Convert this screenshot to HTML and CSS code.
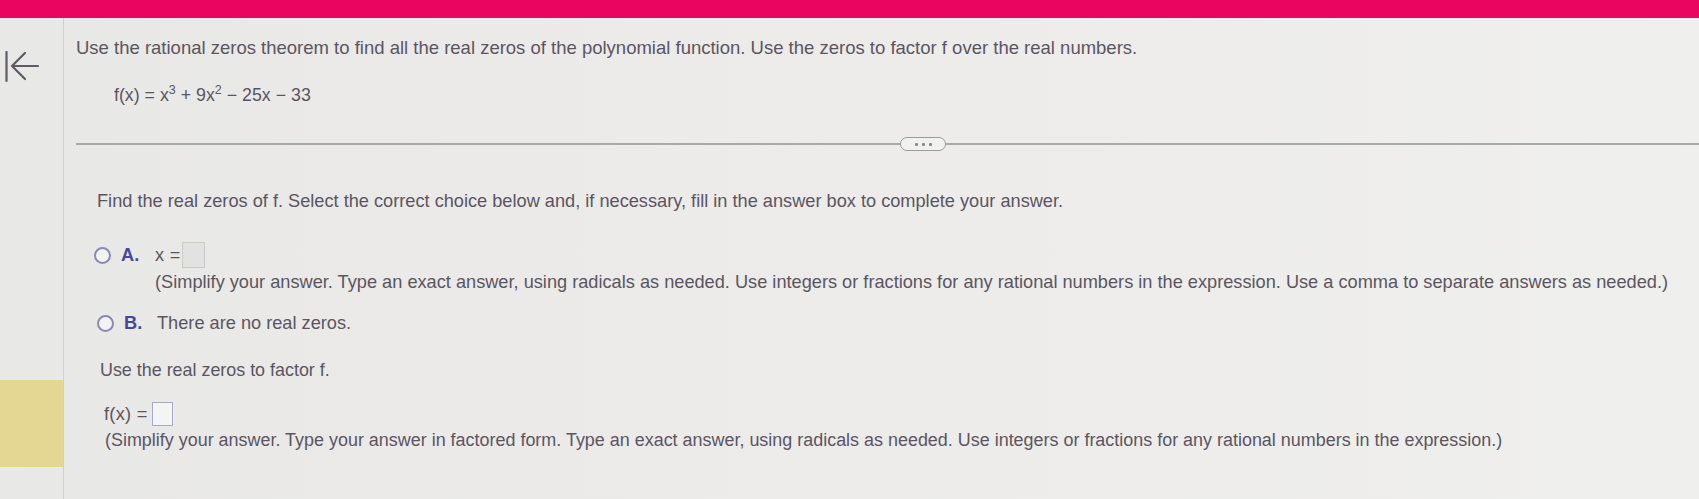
FILE: index.html
```html
<!DOCTYPE html>
<html>
<head>
<meta charset="utf-8">
<link rel="stylesheet" href="styles.css">
</head>
<body>
<div class="topbar"></div>
<div class="main">
  <aside class="sidebar">
    <svg class="back" width="40" height="32" viewBox="0 0 40 32">
      <path d="M5.5 1 V30" stroke="#5f5a66" stroke-width="2.2" fill="none" stroke-linecap="round"/>
      <path d="M11 15 H37 M24 2 L11 15 L24 28" stroke="#5f5a66" stroke-width="2.2" fill="none" stroke-linecap="round" stroke-linejoin="round"/>
    </svg>
    <div class="marker"></div>
  </aside>
  <section class="content">
    <p class="title">Use the rational zeros theorem to find all the real zeros of the polynomial function. Use the zeros to factor f over the real numbers.</p>
    <p class="formula">f(x) = x<sup>3</sup> + 9x<sup>2</sup> − 25x − 33</p>
    <div class="divider">
      <span class="line left"></span>
      <span class="pill"><i></i><i></i><i></i></span>
      <span class="line right"></span>
    </div>
    <p class="find">Find the real zeros of f. Select the correct choice below and, if necessary, fill in the answer box to complete your answer.</p>
    <div class="opt opt-a">
      <span class="radio"></span><span class="letter">A.</span>
      <span class="eq">x =</span><span class="box box-gray"></span>
    </div>
    <p class="hint hint-a">(Simplify your answer. Type an exact answer, using radicals as needed. Use integers or fractions for any rational numbers in the expression. Use a comma to separate answers as needed.)</p>
    <div class="opt opt-b">
      <span class="radio"></span><span class="letter">B.</span>
      <span class="txt">There are no real zeros.</span>
    </div>
    <p class="factor">Use the real zeros to factor f.</p>
    <div class="fx"><span class="eq">f(x) =</span><span class="box box-white"></span></div>
    <p class="hint hint-f">(Simplify your answer. Type your answer in factored form. Type an exact answer, using radicals as needed. Use integers or fractions for any rational numbers in the expression.)</p>
  </section>
</div>
</body>
</html>
```
FILE: styles.css
```css
* { box-sizing: border-box; }
html, body {
  margin: 0;
  padding: 0;
  width: 1699px;
  height: 499px;
  overflow: hidden;
}
body {
  background: linear-gradient(90deg, #e8e8e6 0%, #ecebea 40%, #efefed 100%);
  font-family: "Liberation Sans", Arial, sans-serif;
  color: #5b5561;
  font-size: 18.2px;
}
.topbar {
  height: 18px;
  background: #ea0560;
}
.main {
  display: flex;
  height: 481px;
}
.sidebar {
  width: 64px;
  flex: none;
  border-right: 1.5px solid #cfcfcf;
  display: flex;
  flex-direction: column;
}
.back {
  margin: 33px 0 0 1px;
  display: block;
}
.marker {
  margin-top: 297px;
  height: 87px;
  background: #e4d793;
}
.content {
  flex: 1;
  padding-left: 12px;
  padding-top: 18px;
}
p { margin: 0; line-height: 22px; }
.title { margin-top: 1px; font-size: 18.5px; }
.formula {
  margin: 25px 0 0 38px;
  font-size: 17.8px;
}
sup { font-size: 12.5px; line-height: 0; vertical-align: 7px; }
.divider {
  display: flex;
  align-items: center;
  height: 14px;
  margin-top: 31px;
}
.line { height: 1.5px; background: #a9a9ab; }
.line.left { width: 824px; }
.line.right { flex: 1; }
.pill {
  width: 46px;
  height: 14px;
  border: 1.5px solid #9c9c9e;
  border-radius: 7px;
  background: #f1f1f0;
  display: flex;
  align-items: center;
  justify-content: center;
  gap: 4px;
}
.pill i { width: 3px; height: 3px; background: #8a8a8e; border-radius: 1px; display: block; }
.find { margin: 39px 0 0 21px; }
.opt {
  display: flex;
  align-items: center;
  height: 26px;
}
.opt-a { margin: 30px 0 0 18px; }
.opt-b { margin: 17px 0 0 21px; }
.radio {
  width: 17px;
  height: 17px;
  border: 2px solid #8c88b4;
  border-radius: 50%;
  background: #f3f3f3;
  flex: none;
}
.letter {
  font-weight: bold;
  color: #4746a0;
  margin-left: 10px;
  width: 34px;
}
.opt-b .letter { width: 33px; }
.eq { letter-spacing: 0.3px; }
.box {
  display: inline-block;
  width: 23px;
  height: 26px;
  margin-left: 4px;
}
.box-gray { background: #e2e2e2; border: 1.5px solid #cacaca; margin-left: 1px; }
.box-white { background: #f4f4f4; border: 1.5px solid #a7a9c9; width: 21px; height: 24px; }
.hint-a { margin: 3px 0 0 79px; }
.factor { margin: 23px 0 0 24px; font-size: 17.9px; }
.fx {
  display: flex;
  align-items: center;
  height: 26px;
  margin: 20px 0 0 28px;
}
.hint-f { margin: 2px 0 0 29px; font-size: 17.95px; }
```
